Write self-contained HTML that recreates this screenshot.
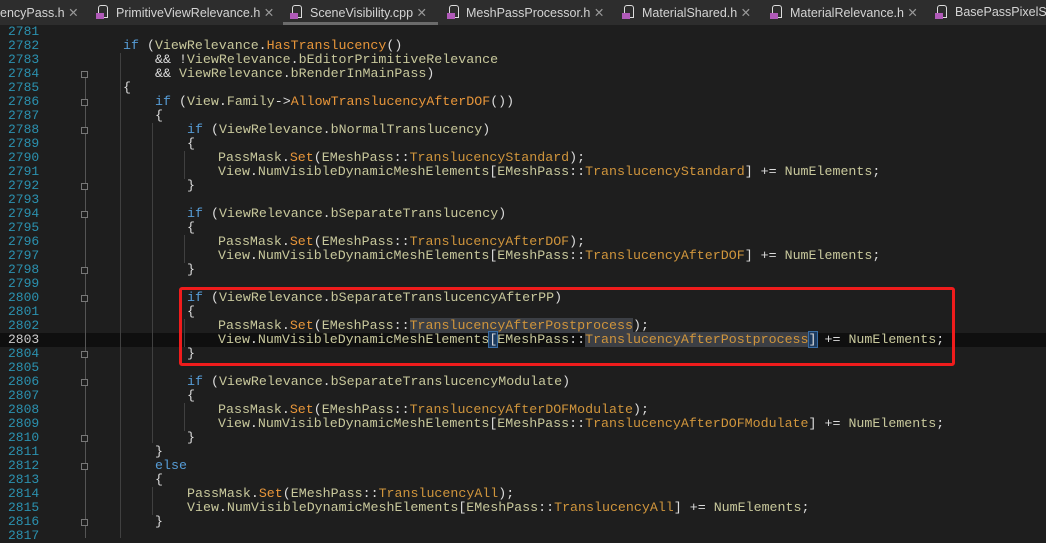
<!DOCTYPE html>
<html><head><meta charset="utf-8"><style>
body{margin:0;width:1046px;height:538px;background:#1e1e1e;overflow:hidden;position:relative;font-family:"Liberation Mono",monospace}
.tabs{position:absolute;left:0;top:0;width:1046px;height:25px;background:#2d2d2d;font-family:"Liberation Sans",sans-serif;font-size:12.5px;color:#d4d4d4}
.tabs span{position:absolute;top:5px;white-space:nowrap}
.x{color:#9a9a9a}
.ic{position:absolute;top:5px;width:10px;height:13px;border:1.5px solid #ddd;border-radius:3px 3px 0 0;box-sizing:border-box}
.ic i{position:absolute;left:-3px;bottom:-2px;width:8px;height:6px;background:#b05ab8}
.act{position:absolute;left:283px;top:22px;width:155px;height:3px;background:#6b6b6b}
.ln{position:absolute;left:8px;font-size:13px;color:#2b91af;height:14px;line-height:14px}
.c{position:absolute;font-size:13.3px;line-height:14px;height:14px;white-space:pre;color:#c8c89c}
.k{color:#569cd6}.f{color:#e8963a}.e{color:#d0953c}.p{color:#dcdcdc}
.hl{background:#3c3f45}
.g{position:absolute;width:1px;background:#404040}
.fm{position:absolute;left:81px;width:7px;height:7px;border:1px solid #777;background:#1e1e1e;box-sizing:border-box}
</style></head><body>
<div class="tabs">
<span style="left:0">encyPass.h <span class="x" style="position:static">✕</span></span>
<div class="ic" style="left:98px"><i></i></div><span style="left:116px">PrimitiveViewRelevance.h <span class="x" style="position:static">✕</span></span>
<div class="ic" style="left:292px"><i></i></div><span style="left:310px">SceneVisibility.cpp <span class="x" style="position:static">✕</span></span>
<div class="ic" style="left:449px"><i></i></div><span style="left:466px">MeshPassProcessor.h <span class="x" style="position:static">✕</span></span>
<div class="ic" style="left:624px"><i></i></div><span style="left:642px">MaterialShared.h <span class="x" style="position:static">✕</span></span>
<div class="ic" style="left:772px"><i></i></div><span style="left:790px">MaterialRelevance.h <span class="x" style="position:static">✕</span></span>
<div class="ic" style="left:937px"><i></i></div><span style="left:955px">BasePassPixelSh</span>
<div class="act"></div>
</div>
<div style="position:absolute;left:0;top:333px;width:1046px;height:14px;background:#0f0f0f"></div>
<div class="g" style="left:85px;top:78px;height:460px;background:#555"></div>
<div class="g" style="left:120px;top:53px;height:485px"></div>
<div class="g" style="left:152px;top:123px;height:320px"></div>
<div class="g" style="left:184px;top:151px;height:28px"></div>
<div class="g" style="left:184px;top:235px;height:28px"></div>
<div class="g" style="left:184px;top:319px;height:28px"></div>
<div class="g" style="left:184px;top:403px;height:28px"></div>
<div class="g" style="left:152px;top:487px;height:28px"></div>
<div class="fm" style="top:71px"></div><div class="fm" style="top:99px"></div><div class="fm" style="top:127px"></div>
<div class="fm" style="top:183px"></div><div class="fm" style="top:211px"></div><div class="fm" style="top:267px"></div>
<div class="fm" style="top:295px"></div><div class="fm" style="top:351px"></div><div class="fm" style="top:379px"></div>
<div class="fm" style="top:435px"></div><div class="fm" style="top:463px"></div><div class="fm" style="top:519px"></div>
<div class="ln" style="top:25px">2781</div><div class="ln" style="top:39px">2782</div><div class="ln" style="top:53px">2783</div><div class="ln" style="top:67px">2784</div><div class="ln" style="top:81px">2785</div><div class="ln" style="top:95px">2786</div><div class="ln" style="top:109px">2787</div><div class="ln" style="top:123px">2788</div><div class="ln" style="top:137px">2789</div><div class="ln" style="top:151px">2790</div><div class="ln" style="top:165px">2791</div><div class="ln" style="top:179px">2792</div><div class="ln" style="top:193px">2793</div><div class="ln" style="top:207px">2794</div><div class="ln" style="top:221px">2795</div><div class="ln" style="top:235px">2796</div><div class="ln" style="top:249px">2797</div><div class="ln" style="top:263px">2798</div><div class="ln" style="top:277px">2799</div><div class="ln" style="top:291px">2800</div><div class="ln" style="top:305px">2801</div><div class="ln" style="top:319px">2802</div><div class="ln" style="top:333px;color:#ccc">2803</div><div class="ln" style="top:347px">2804</div><div class="ln" style="top:361px">2805</div><div class="ln" style="top:375px">2806</div><div class="ln" style="top:389px">2807</div><div class="ln" style="top:403px">2808</div><div class="ln" style="top:417px">2809</div><div class="ln" style="top:431px">2810</div><div class="ln" style="top:445px">2811</div><div class="ln" style="top:459px">2812</div><div class="ln" style="top:473px">2813</div><div class="ln" style="top:487px">2814</div><div class="ln" style="top:501px">2815</div><div class="ln" style="top:515px">2816</div><div class="ln" style="top:529px">2817</div>

<div class="c" style="left:123px;top:39px"><span class="k">if</span> <span class="p">(</span>ViewRelevance<span class="p">.</span><span class="f">HasTranslucency</span><span class="p">()</span></div>
<div class="c" style="left:155px;top:53px"><span class="p">&amp;&amp; !</span>ViewRelevance<span class="p">.</span>bEditorPrimitiveRelevance</div>
<div class="c" style="left:155px;top:67px"><span class="p">&amp;&amp; </span>ViewRelevance<span class="p">.</span>bRenderInMainPass<span class="p">)</span></div>
<div class="c p" style="left:123px;top:81px">{</div>
<div class="c" style="left:155px;top:95px"><span class="k">if</span> <span class="p">(</span>View<span class="p">.</span>Family<span class="p">-&gt;</span><span class="f">AllowTranslucencyAfterDOF</span><span class="p">())</span></div>
<div class="c p" style="left:155px;top:109px">{</div>
<div class="c" style="left:187px;top:123px"><span class="k">if</span> <span class="p">(</span>ViewRelevance<span class="p">.</span>bNormalTranslucency<span class="p">)</span></div>
<div class="c p" style="left:187px;top:137px">{</div>
<div class="c" style="left:218px;top:151px">PassMask<span class="p">.</span><span class="f">Set</span><span class="p">(</span>EMeshPass<span class="p">::</span><span class="e">TranslucencyStandard</span><span class="p">);</span></div>
<div class="c" style="left:218px;top:165px">View<span class="p">.</span>NumVisibleDynamicMeshElements<span class="p">[</span>EMeshPass<span class="p">::</span><span class="e">TranslucencyStandard</span><span class="p">] += </span>NumElements<span class="p">;</span></div>
<div class="c p" style="left:187px;top:179px">}</div>
<div class="c" style="left:187px;top:207px"><span class="k">if</span> <span class="p">(</span>ViewRelevance<span class="p">.</span>bSeparateTranslucency<span class="p">)</span></div>
<div class="c p" style="left:187px;top:221px">{</div>
<div class="c" style="left:218px;top:235px">PassMask<span class="p">.</span><span class="f">Set</span><span class="p">(</span>EMeshPass<span class="p">::</span><span class="e">TranslucencyAfterDOF</span><span class="p">);</span></div>
<div class="c" style="left:218px;top:249px">View<span class="p">.</span>NumVisibleDynamicMeshElements<span class="p">[</span>EMeshPass<span class="p">::</span><span class="e">TranslucencyAfterDOF</span><span class="p">] += </span>NumElements<span class="p">;</span></div>
<div class="c p" style="left:187px;top:263px">}</div>
<div class="c" style="left:187px;top:291px"><span class="k">if</span> <span class="p">(</span>ViewRelevance<span class="p">.</span>bSeparateTranslucencyAfterPP<span class="p">)</span></div>
<div class="c p" style="left:187px;top:305px">{</div>
<div class="c" style="left:218px;top:319px">PassMask<span class="p">.</span><span class="f">Set</span><span class="p">(</span>EMeshPass<span class="p">::</span><span class="e hl">TranslucencyAfterPostprocess</span><span class="p">);</span></div>
<div class="c" style="left:218px;top:333px">View<span class="p">.</span>NumVisibleDynamicMeshElements<span class="p" style="background:#1c3a5e;outline:1px solid #3a6ea5">[</span>EMeshPass<span class="p">::</span><span class="e hl">TranslucencyAfterPostprocess</span><span class="p" style="background:#1c3a5e;outline:1px solid #3a6ea5">]</span><span class="p"> += </span>NumElements<span class="p">;</span></div>
<div class="c p" style="left:187px;top:347px">}</div>
<div class="c" style="left:187px;top:375px"><span class="k">if</span> <span class="p">(</span>ViewRelevance<span class="p">.</span>bSeparateTranslucencyModulate<span class="p">)</span></div>
<div class="c p" style="left:187px;top:389px">{</div>
<div class="c" style="left:218px;top:403px">PassMask<span class="p">.</span><span class="f">Set</span><span class="p">(</span>EMeshPass<span class="p">::</span><span class="e">TranslucencyAfterDOFModulate</span><span class="p">);</span></div>
<div class="c" style="left:218px;top:417px">View<span class="p">.</span>NumVisibleDynamicMeshElements<span class="p">[</span>EMeshPass<span class="p">::</span><span class="e">TranslucencyAfterDOFModulate</span><span class="p">] += </span>NumElements<span class="p">;</span></div>
<div class="c p" style="left:187px;top:431px">}</div>
<div class="c p" style="left:155px;top:445px">}</div>
<div class="c k" style="left:155px;top:459px">else</div>
<div class="c p" style="left:155px;top:473px">{</div>
<div class="c" style="left:187px;top:487px">PassMask<span class="p">.</span><span class="f">Set</span><span class="p">(</span>EMeshPass<span class="p">::</span><span class="e">TranslucencyAll</span><span class="p">);</span></div>
<div class="c" style="left:187px;top:501px">View<span class="p">.</span>NumVisibleDynamicMeshElements<span class="p">[</span>EMeshPass<span class="p">::</span><span class="e">TranslucencyAll</span><span class="p">] += </span>NumElements<span class="p">;</span></div>
<div class="c p" style="left:155px;top:515px">}</div>

<div style="position:absolute;left:179px;top:287px;width:776px;height:79px;border:3px solid #f01c1c;border-radius:3px;box-sizing:border-box"></div>
</body></html>
